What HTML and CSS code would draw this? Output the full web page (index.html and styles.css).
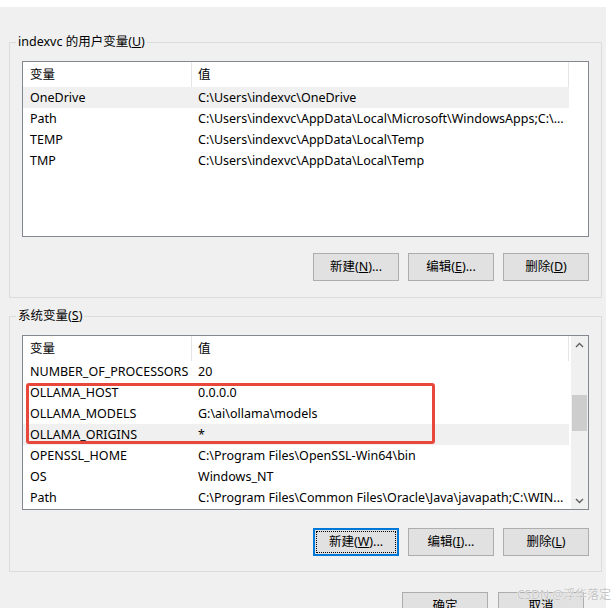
FILE: index.html
```html
<!DOCTYPE html>
<html lang="zh-CN">
<head>
  <meta charset="UTF-8">
  <title>环境变量</title>
  <link rel="stylesheet" href="styles.css">
</head>
<body>
  <div class="top-strip"></div>

  <div class="dialog">
    <fieldset class="group">
      <legend>indexvc 的用户变量(<u>U</u>)</legend>
      <div class="listbox user-list">
        <div class="list-body">
          <div class="list-head">
            <div class="cell name">变量</div>
            <div class="cell value">值</div>
          </div>
          <div class="row selected"><div class="cell name">OneDrive</div><div class="cell value">C:\Users\indexvc\OneDrive</div></div>
          <div class="row"><div class="cell name">Path</div><div class="cell value">C:\Users\indexvc\AppData\Local\Microsoft\WindowsApps;C:\...</div></div>
          <div class="row"><div class="cell name">TEMP</div><div class="cell value">C:\Users\indexvc\AppData\Local\Temp</div></div>
          <div class="row"><div class="cell name">TMP</div><div class="cell value">C:\Users\indexvc\AppData\Local\Temp</div></div>
        </div>
      </div>
      <div class="actions">
        <button class="btn">新建(<u>N</u>)...</button>
        <button class="btn">编辑(<u>E</u>)...</button>
        <button class="btn">删除(<u>D</u>)</button>
      </div>
    </fieldset>

    <fieldset class="group system">
      <legend>系统变量(<u>S</u>)</legend>
      <div class="listbox system-list">
        <div class="list-body">
          <div class="list-head">
            <div class="cell name">变量</div>
            <div class="cell value">值</div>
          </div>
          <div class="row"><div class="cell name">NUMBER_OF_PROCESSORS</div><div class="cell value">20</div></div>
          <div class="row"><div class="cell name">OLLAMA_HOST</div><div class="cell value">0.0.0.0</div></div>
          <div class="row"><div class="cell name">OLLAMA_MODELS</div><div class="cell value">G:\ai\ollama\models</div></div>
          <div class="row selected"><div class="cell name">OLLAMA_ORIGINS</div><div class="cell value">*</div></div>
          <div class="row"><div class="cell name">OPENSSL_HOME</div><div class="cell value">C:\Program Files\OpenSSL-Win64\bin</div></div>
          <div class="row"><div class="cell name">OS</div><div class="cell value">Windows_NT</div></div>
          <div class="row"><div class="cell name">Path</div><div class="cell value">C:\Program Files\Common Files\Oracle\Java\javapath;C:\WIN...</div></div>
        </div>
        <div class="scrollbar">
          <div class="arrow">
            <svg width="9" height="6" viewBox="0 0 9 6"><polyline points="1,5 4.5,1.5 8,5" fill="none" stroke="#606060" stroke-width="1.4"/></svg>
          </div>
          <div class="track"><div class="thumb"></div></div>
          <div class="arrow">
            <svg width="9" height="6" viewBox="0 0 9 6"><polyline points="1,1 4.5,4.5 8,1" fill="none" stroke="#606060" stroke-width="1.4"/></svg>
          </div>
        </div>
        <div class="mark"></div>
      </div>
      <div class="actions">
        <button class="btn focused">新建(<u>W</u>)...</button>
        <button class="btn">编辑(<u>I</u>)...</button>
        <button class="btn">删除(<u>L</u>)</button>
      </div>
    </fieldset>

    <div class="dialog-actions">
      <button class="btn">确定</button>
      <button class="btn">取消</button>
    </div>
  </div>

  <div class="watermark">CSDN @浮华落定</div>
</body>
</html>
```

FILE: styles.css
```css
:root {
  --face: #f0f0f0;
  --group-border: #dcdcdc;
  --list-border: #828790;
  --btn-bg: #e1e1e1;
  --btn-border: #adadad;
  --accent: #0078d7;
  --mark: #e8473b;
}

* {
  margin: 0;
  padding: 0;
  box-sizing: border-box;
}

body {
  width: 614px;
  height: 608px;
  overflow: hidden;
  position: relative;
  background: #fff;
  color: #000;
  font-family: "Noto Sans", "Noto Sans CJK SC", sans-serif;
  font-size: 12.5px;
  line-height: 16px;
}

u {
  text-underline-offset: 1px;
}

.top-strip {
  height: 7px;
  background: #fff;
}

.dialog {
  width: 606px;
  height: 601px;
  background: var(--face);
  padding: 27px 0 0 9px;
}

.group {
  width: 593px;
  border: 1px solid var(--group-border);
  padding: 11px 12px 16px;
}

.group legend {
  margin-left: -6px;
  padding: 0 2px;
  line-height: 16px;
}

.group.system {
  margin-top: 10px;
  padding-bottom: 15px;
}

.listbox {
  position: relative;
  display: flex;
  background: #fff;
  border: 1px solid var(--list-border);
}

.user-list {
  height: 176px;
}

.system-list {
  height: 175px;
}

.list-body {
  flex: 1;
  overflow: hidden;
}

.list-head,
.row {
  display: flex;
  width: 546px;
}

.list-head {
  height: 25px;
  align-items: center;
}

.list-head .cell {
  height: 100%;
  display: flex;
  align-items: center;
  border-right: 1px solid #e5e5e5;
}

.row {
  height: 21px;
  align-items: center;
}

.row.selected {
  background: #f0f0f0;
}

.cell {
  white-space: nowrap;
  overflow: hidden;
}

.cell.name {
  width: 169px;
  padding-left: 7px;
}

.cell.value {
  flex: 1;
  padding-left: 6px;
}

.scrollbar {
  width: 17px;
  margin-left: 2px;
  display: flex;
  flex-direction: column;
  background: var(--face);
}

.arrow {
  height: 17px;
  display: flex;
  align-items: center;
  justify-content: center;
}

.track {
  flex: 1;
  padding: 42px 1px 0;
}

.thumb {
  height: 36px;
  background: #cdcdcd;
}

.mark {
  position: absolute;
  left: 3px;
  top: 47px;
  width: 409px;
  height: 61px;
  border: 3px solid var(--mark);
  border-radius: 3px;
}

.actions {
  display: flex;
  justify-content: flex-end;
  gap: 9px;
  margin-top: 16px;
}

.system .actions {
  margin-top: 18px;
}

.btn {
  width: 86px;
  height: 28px;
  background: var(--btn-bg);
  border: 1px solid var(--btn-border);
  font: inherit;
  color: #000;
}

.btn.focused {
  border: 2px solid var(--accent);
  outline: 1px dotted #000;
  outline-offset: -4px;
}

.dialog-actions {
  display: flex;
  justify-content: flex-end;
  gap: 10px;
  margin: 20px 22px 0 0;
}

.watermark {
  position: absolute;
  left: 517px;
  top: 587px;
  font-size: 12px;
  color: #c4c4c4;
  text-shadow: 0 0 1px #fff, 0 0 1px #fff;
  white-space: nowrap;
}
```
